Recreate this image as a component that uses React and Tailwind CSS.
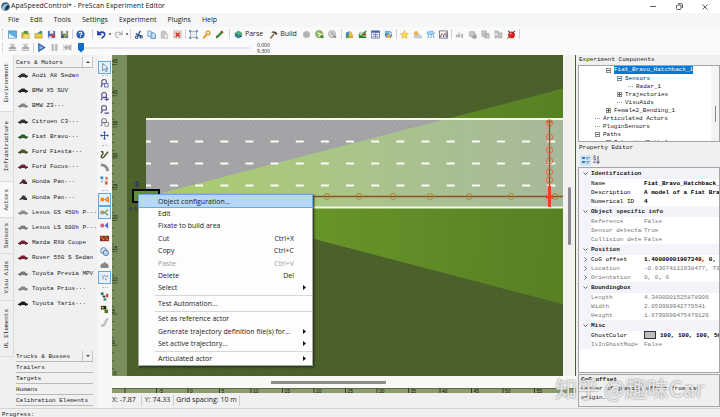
import React from "react";

const mono = "font-['Liberation_Mono',monospace] text-[6px]";

const shapes = {
  scene: <><rect x="0.5" y="1" width="9" height="8" fill="#5aaee0" stroke="#3b78b0" strokeWidth="0.6" /><path d="M1 8.5V4l3 2 2 1 3 1.500z" fill="#e9f6fb" /></>,
  open: <><path d="M1 3h3l1 1h4v5H1z" fill="#e7b52c" stroke="#8a7420" strokeWidth="0.6" /><path d="M3 1h5v3H3z" fill="#4d9a3c" /><path d="M2 9l2-4h6L8 9z" fill="#f6dc6d" /></>,
  openAdd: <><path d="M1 4h8v5H1z" fill="#efc944" stroke="#948030" strokeWidth="0.6" /><path d="M3 4l4-3 2 3z" fill="#3d8bc4" /><path d="M7 1h2v3H7z" fill="#3f9a45" /></>,
  save: <><rect x="1" y="1" width="8" height="8" fill="#486fc0" /><rect x="3" y="1" width="4" height="3" fill="#f4f4f8" /><path d="M4 5h5v3H4z" fill="#d94040" /><rect x="2" y="7" width="3" height="2" fill="#dfe7f6" /></>,
  saveAs: <><rect x="1" y="1" width="8" height="8" fill="#6b7e92" /><rect x="3" y="1" width="4" height="3" fill="#f2f2d8" /><path d="M3 8l5-5 1 1-5 5z" fill="#b0c02d" /><rect x="2" y="6" width="2" height="3" fill="#344a60" /></>,
  help: <><circle cx="5" cy="5" r="4.500" fill="#2b63b5" /><path d="M3.500 4c0-2 3-2 3 0 0 1-1.500 1-1.500 2M5 7v1" fill="none" stroke="#fff" strokeWidth="1.200" /></>,
  undo: <path d="M1 1v4h4M1.500 4.500C4 1 9 2 8.500 5.500 8 8 6 8.500 5 9" fill="none" stroke="#2c3fa8" strokeWidth="1.800" />,
  redo: <path d="M9 1v4H5M8.500 4.500C6 1 1 2 1.500 5.500 2 8 4 8.500 5 9" fill="none" stroke="#b7b7b7" strokeWidth="1.400" />,
  cut: <><path d="M7 1L4 7M2 4l6 3" stroke="#30548c" strokeWidth="1.500" /><circle cx="3" cy="8" r="1.400" fill="none" stroke="#24457e" strokeWidth="1.200" /><circle cx="8" cy="7.500" r="1.300" fill="none" stroke="#24457e" strokeWidth="1.200" /></>,
  copy: <><path d="M1 1h3l1.500 1.500V7H1z" fill="#d8ecfa" stroke="#4a86bd" strokeWidth="0.800" /><path d="M4.500 3h3L9.500 5v4.500h-5z" fill="#bcdcf4" stroke="#3c78b4" strokeWidth="0.800" /></>,
  paste: <><path d="M1.500 2h5v7h-5z" fill="#d2d2d2" stroke="#a9a9a9" strokeWidth="0.800" /><path d="M3 1h2v1H3zM4.500 4.500h4v5h-4z" fill="#ececec" stroke="#a9a9a9" strokeWidth="0.700" /></>,
  del: <><rect x="1" y="1" width="8" height="8" fill="#f2ded8" stroke="#8c8583" strokeWidth="0.800" strokeDasharray="1.500 1" /><path d="M3 3l4.500 4.500M7.500 3L3 7.500" stroke="#ce2f1d" strokeWidth="1.800" /></>,
  select: <><rect x="1.500" y="1.500" width="7" height="7" fill="#e7edf5" stroke="#8593a8" strokeWidth="0.700" /><path d="M0 0h2.500v2.500H0zM7.500 0H10v2.500H7.500zM0 7.500h2.500V10H0zM7.500 7.500H10V10H7.500z" fill="#7c98bf" /></>,
  wrench: <><path d="M1.500 9l4-4.500" stroke="#e09a26" strokeWidth="2.200" /><circle cx="6.800" cy="3.200" r="2" fill="none" stroke="#e5a83a" strokeWidth="1.700" /></>,
  pencil: <><path d="M1 9l1-3 5-5 2 2-5 5z" fill="#459b3c" /><path d="M6 2l1.500-1.500 2 2L8 4z" fill="#a83c32" /><path d="M1 9l1-2.500 1.500 1.500z" fill="#333" /></>,
  parse: <><path d="M5 0.500L9 3v4L5 9.500 1 7V3z" fill="#5ab174" /><path d="M1 3l4 2v4.500L1 7z" fill="#2b8196" /><path d="M6 5l3 2-3 2z" fill="#1b5ca0" /></>,
  hammer: <><path d="M1.500 9.500l4-5" stroke="#a0632b" strokeWidth="1.600" /><path d="M2.500 2.500C4 0.500 7 1 9.500 4L8 5.500 5.500 3.500z" fill="#4d4a47" /></>,
  ball: <><circle cx="5" cy="5" r="4" fill="#b9b9b9" /><path d="M3 3l4 4M7 3L3 7" stroke="#a0a0a0" strokeWidth="0.800" /></>,
  ballGreen: <><circle cx="4.500" cy="4.500" r="4" fill="#8fbf5e" stroke="#6a8c50" strokeWidth="0.600" /><path d="M3 3l4 2-3 2" fill="none" stroke="#fff" strokeWidth="1.200" /><path d="M6 6h3.500v3H6z" fill="#468833" /></>,
  ballGrey: <><circle cx="4.500" cy="4.500" r="4" fill="#cfcfcf" stroke="#a1a1a1" strokeWidth="0.700" /><path d="M3 3h3v3M6 6h3v3H6z" fill="#999" /></>,
  palette: <><path d="M1 3l4-2v8H1z" fill="#3f89cc" /><path d="M4 4l3-3 2 5-4 1z" fill="#edc034" /><path d="M3 6h6v3H3z" fill="#d8a94a" /><path d="M1 6h3v3H1z" fill="#3c9a54" /></>,
  checks: <><path d="M1 2h8v7H1z" fill="#b9d5ae" /><path d="M1 5l2 3 6-7M1 8h8" fill="none" stroke="#27792a" strokeWidth="1.500" /><path d="M6 4h3v2H6z" fill="#b43a30" /></>,
  table: <><rect x="0.500" y="1" width="9" height="8" fill="#eaeefa" stroke="#5b6a9c" strokeWidth="0.800" /><rect x="0.500" y="1" width="9" height="2" fill="#475fa8" /><path d="M2 5h6M2 7h6M5 3v6" stroke="#7785b8" strokeWidth="0.900" /></>,
  globe: <><circle cx="5" cy="5" r="4" fill="#3c85c6" /><path d="M1 1h5v3H1z" fill="#6cb0de" /><path d="M3 5h4v4H3z" fill="#ecab45" /><path d="M5 2l4 2-2 2z" fill="#d8edf6" /></>,
  star: <path d="M5 0.500l1.400 3 3.100.4-2.300 2.200.6 3.200L5 7.800 2.200 9.300l.6-3.200L.5 3.900l3.100-.4z" fill="#ffdb58" stroke="#d1a52e" strokeWidth="0.600" />,
  cloud: <><circle cx="3.500" cy="3.500" r="2.500" fill="#f0b24c" /><path d="M2 8.500c-2-2 1-4 2-2 1-3 4-2 4 0 2 0 2 2 0 2.500z" fill="#cdd3da" stroke="#98a1ad" strokeWidth="0.600" /></>,
  rain: <><path d="M2 5c-2-2 0-4 2-3 2-2 5 0 5 1 1 2-1 2-2 2z" fill="#aad5f4" stroke="#4b94cd" strokeWidth="0.700" /><path d="M3 6L2 9M6 6L5 9M8 6L9 9" stroke="#4b94cd" strokeWidth="1" /></>,
  chart: <><rect x="0.500" y="1" width="9" height="8" fill="#fafafa" stroke="#55555e" strokeWidth="0.800" /><path d="M1.500 7l2-3 2 2 3-4" fill="none" stroke="#b43838" strokeWidth="1" /><path d="M2 8V6.500M5 8V6M8 8V4" stroke="#3a4c96" strokeWidth="1.100" /></>,
  greyA: <path d="M1 5h3V2h1v3h1v3H1zM7 4h2v5H7z" fill="#b3b3b3" />,
  greyB: <><circle cx="4.500" cy="4.500" r="3.800" fill="#bdbdbd" /><path d="M5 5h4.500v4.500H5z" fill="#9c9c9c" /><path d="M2.500 3l4 3" stroke="#e4e4e4" strokeWidth="1" /></>,
  greyC: <path d="M1 1h5v6H1zM4 4h5v5H4z" fill="#cacaca" stroke="#a0a0a0" strokeWidth="0.700" />,
  greyD: <path d="M1 1h4v3H1zM5 3h4v3H5zM1 6h4v3H1zM6 7h3v2H6z" fill="#c2c2c2" stroke="#a5a5a5" strokeWidth="0.600" />,
  redBall: <><circle cx="5" cy="5.500" r="3.800" fill="#c8271c" /><path d="M1 1l3 2M9 1L6.500 3M1.500 8L0.500 9.500" stroke="#333" strokeWidth="1.100" /><circle cx="4" cy="4" r="1.200" fill="#f59186" /></>,
  carGrey: <><path d="M1 5l2-1 2-2 2 2 2 1v2H1zM0.500 8h9v1h-9z" fill="#aaa" /><path d="M2 1.500h6" stroke="#b5b5b5" strokeWidth="1" /></>,
  play: <path d="M2 1l6.500 4L2 9z" fill="#85b9ef" stroke="#1f5db1" strokeWidth="1.300" />,
  pause: <path d="M2 1.500h2v7H2zM6 1.500h2v7H6z" fill="#c6c6c6" stroke="#a0a0a0" strokeWidth="0.500" />,
  skip: <path d="M1 1.500v7M1.500 5l3-3v6zM5 5l3-3v6zM9 1.500v7" fill="#aaa" stroke="#aaa" strokeWidth="0.800" />,
  pointer: <path d="M3 0.500v8l2-2 1.500 3L8 9 6.500 6H9z" fill="#fff" stroke="#45617f" strokeWidth="0.800" />,
  zoomWin: <><path d="M2 7V2.500C2 0 7 0 7 2.500V5H3M1 9l2-3" fill="none" stroke="#4c4c8c" strokeWidth="1.200" /><path d="M5 5h4v4H5z" fill="#edf1fa" stroke="#4864b4" strokeWidth="0.900" /></>,
  zoomIn: <path d="M2 6V2.500C2 0 7 0 7 2.500V6H3M1 9l2-3M5 8h5M7.500 5.500v4.500" fill="none" stroke="#484888" strokeWidth="1.200" />,
  zoomOut: <path d="M2 6V2.500C2 0 7 0 7 2.500V5.500H3M1 9l2-3M5 9h5" fill="none" stroke="#484888" strokeWidth="1.200" />,
  zoomAll: <><path d="M2 6V2.500C2 0 7 0 7 2.500V5H3M1 9l2-3" fill="none" stroke="#555570" strokeWidth="1.100" /><path d="M5.500 5h4v4h-4z" fill="#fff" stroke="#777" strokeWidth="0.900" /></>,
  move: <><path d="M5 1v8M1 5h8" stroke="#4355a5" strokeWidth="1.100" /><path d="M5 0l1.700 2H3.300zM5 10L3.300 8h3.400zM0 5l2-1.700v3.400zM10 5L8 6.700V3.300z" fill="#4355a5" /></>,
  curve: <path d="M1 2c3-1 3 2 1 4s1 4 3 1l4-5" fill="none" stroke="#4d582c" strokeWidth="1.600" />,
  bend: <path d="M1 2c4 0 7 2 7.500 7" fill="none" stroke="#8b8b8b" strokeWidth="3" />,
  nodes: <><path d="M2 2l5 6M8 3L7 8" stroke="#bbb" strokeWidth="0.600" /><path d="M0.500 0.500h3v3h-3z" fill="#3d84cb" /><path d="M6 1h2.500v3H6z" fill="#e36c38" /><path d="M5.500 6h3v3.500h-3z" fill="#de5e35" /><circle cx="2" cy="6" r="1" fill="#74a5d2" /></>,
  camOrange: <><path d="M0.500 3h4v4h-4z" fill="#ef8b2d" /><path d="M5 5l4.500-3v6z" fill="#f0a844" stroke="#d8641d" strokeWidth="0.800" /></>,
  camGreen: <><path d="M0.500 3h4v4h-4z" fill="#ad9a6a" /><path d="M9 2L5 5l4 3" fill="none" stroke="#719552" strokeWidth="1.400" /></>,
  camBlue: <><path d="M0.500 3h4v4h-4z" fill="#d56180" /><path d="M5 5l4-3.500v7z" fill="#5864e0" /></>,
  film: <><rect x="0" y="2" width="10" height="6" fill="#7e2c20" /><path d="M1 3h2v2H1zM5 3h3v1H5zM3 5h2v2H3zM7 5h2v2H7z" fill="#e58a3a" /></>,
  rings: <><circle cx="4" cy="4" r="3.300" fill="#d5e5f6" stroke="#5778ac" /><circle cx="6.500" cy="6.500" r="3" fill="#bdd7f2" stroke="#4a6ca8" /></>,
  hill: <path d="M0.500 9V6L2 4l1.500 0L5 2l2 2h1.500L9.500 6v3z" fill="#888" />,
  dashes: <path d="M2 3l2 1M5 2l1 2M7 4l2-1M3 7l1-2M6 6l1 2" stroke="#5b7fa6" strokeWidth="1.100" />,
  blocksA: <><path d="M1 0.500h3v3H1z" fill="#2c6f86" /><path d="M3 4h3v2H3z" fill="#333" /><path d="M7 2h2v4H7z" fill="#b2302c" /><path d="M4 7h3v2.500H4z" fill="#30855c" /></>,
  blocksB: <><path d="M1 1h6v4H1z" fill="#26260f" /><path d="M2 2h2v2H2z" fill="#e3d23a" /><path d="M5 5h4v4H5z" fill="#4d7a2c" /></>,
  roadGrey: <path d="M1 9c3 0 4-1 5-4s1-3 3-4" fill="none" stroke="#c2c2c2" strokeWidth="2.800" />,
};

function Icon({ name }) {
  return (
    <svg viewBox="0 0 10 10" className="size-[9px] shrink-0" aria-hidden="true">
      {shapes[name]}
    </svg>
  );
}

function ToolButton({ name, label }) {
  return (
    <button aria-label={label || name} className={label ? "flex h-3 shrink-0 items-center gap-[2px] px-[3px]" : "flex h-3 w-[13px] shrink-0 items-center justify-center"}>
      <Icon name={name} />
      {label}
    </button>
  );
}

const Sep = () => <span className="mx-px h-[10px] w-px shrink-0 bg-[#d2d2d6]" />;
const Grip = () => <span className="mr-[3px] ml-[2px] h-[10px] w-px shrink-0 border-l border-dotted border-[#c4c4c4]" />;
const Caret = () => <span className="mx-px size-[2px] shrink-0 rounded-full bg-[#555]" />;

function Header() {
  return (
    <header className="shrink-0 bg-[#fafafa]">
      <div className="flex h-[13px] items-center bg-white pl-px">
        <svg viewBox="0 0 10 10" className="size-[9px]" aria-hidden="true">
          <circle cx="5" cy="5" r="4.800" fill="#2d5d7c" />
          <path d="M1 6c2-4 5-5 8-3-3 0-4 2-5 6C2 9 1 8 1 6z" fill="#9dc0d3" />
          <path d="M4 7l4-3 1 2-3 3z" fill="#173a54" />
        </svg>
        <h1 className="ml-px flex-1 text-[7px]">ApaSpeedControl* - PreScan Experiment Editor</h1>
        <button aria-label="Minimize" className="flex w-[26px] justify-center"><span className="h-px w-[6px] bg-[#555]" /></button>
        <button aria-label="Restore" className="flex w-[26px] justify-center">
          <svg viewBox="0 0 7 7" className="size-[7px]" fill="none" stroke="#444" strokeWidth="0.900"><rect x="0.500" y="2" width="4.500" height="4.500" rx="1" /><path d="M2 .7h3.500q1 0 1 1V5" /></svg>
        </button>
        <button aria-label="Close" className="mr-[2px] flex w-[26px] justify-center">
          <svg viewBox="0 0 7 7" className="size-[6px]" stroke="#333" strokeWidth="0.900"><path d="M.5.5l6 6M6.500.5l-6 6" /></svg>
        </button>
      </div>
      <nav className="flex h-[14px] items-center gap-[11px] bg-[#f6f6f6] pl-2 text-[7px]">
        {["File", "Edit", "Tools", "Settings", "Experiment", "Plugins", "Help"].map((m) => <button key={m}>{m}</button>)}
      </nav>
      <div className="flex h-[14px] items-center text-[7px]">
        <Grip />
        {["scene", "open", "openAdd", "save", "saveAs"].map((n) => <ToolButton key={n} name={n} />)}
        <Sep />
        <ToolButton name="help" />
        <span className="w-1" /><Sep /><span className="w-px" />
        <ToolButton name="undo" /><Caret /><ToolButton name="redo" /><Caret /><Sep />
        {["cut", "copy", "paste", "del"].map((n) => <ToolButton key={n} name={n} />)}
        <Sep />
        {["select", "wrench", "pencil"].map((n) => <ToolButton key={n} name={n} />)}
        <span className="w-[2px]" /><Sep />
        <ToolButton name="parse" label="Parse" />
        <ToolButton name="hammer" label="Build" />
        {["ball", "ballGreen", "ballGrey"].map((n) => <ToolButton key={n} name={n} />)}
        <span className="w-px" /><Sep />
        {["palette", "checks", "table", "globe"].map((n) => <ToolButton key={n} name={n} />)}
        <Sep />
        {["star", "cloud", "rain", "chart"].map((n) => <ToolButton key={n} name={n} />)}
        <Sep />
        {["greyA", "greyB", "greyC", "greyD", "redBall"].map((n) => <ToolButton key={n} name={n} />)}
        <Sep />
      </div>
      <div className="flex h-[14px] items-center pb-px">
        <Grip />
        <ToolButton name="carGrey" /><ToolButton name="carGrey" /><Sep />
        <ToolButton name="play" /><ToolButton name="pause" /><ToolButton name="skip" />
        <input
          type="range"
          aria-label="Simulation time"
          defaultValue="0"
          className="ml-1 h-[10px] w-[172px] appearance-none bg-transparent [&::-webkit-slider-runnable-track]:h-[2px] [&::-webkit-slider-runnable-track]:bg-[#e6e6e6] [&::-webkit-slider-thumb]:-mt-1 [&::-webkit-slider-thumb]:h-[10px] [&::-webkit-slider-thumb]:w-[6px] [&::-webkit-slider-thumb]:appearance-none [&::-webkit-slider-thumb]:bg-[#0b6fc9] [&::-webkit-slider-thumb]:[clip-path:polygon(0_0,100%_0,100%_70%,50%_100%,0_70%)]"
        />
        <output className="ml-[7px] text-[5px] leading-[6px]">0.000<br />9.300</output>
      </div>
    </header>
  );
}

const tabs = [
  ["Environment", "h-[57px] bg-[#f8f8f8]"],
  ["Infrastructure", "h-[70px]"],
  ["Actors", "h-9 bg-[#f8f8f8]"],
  ["Sensors", "h-9"],
  ["Visu Aids", "h-[47px]"],
  ["UL Elements", "h-14"],
];

const cars = [
  ["Audi A8 Sedan", "#2e2e2e"], ["BMW X5 SUV", "#262626"], ["BMW Z3···", "#858585"], ["Citroen C3···", "#333333"],
  ["Fiat Bravo···", "#2f5a2c"], ["Ford Fiesta···", "#4a5630"], ["Ford Focus···", "#6e2334"], ["Honda Pan···", "#4a2430"],
  ["Honda Pan···", "#35303a"], ["Lexus GS 450h P···", "#8a8c8e"], ["Lexus LS 600h P···", "#7d8082"], ["Mazda RX8 Coupe", "#702233"],
  ["Rover 550 S Sedan", "#7c1f30"], ["Toyota Previa MPV", "#777777"], ["Toyota Prius···", "#888888"], ["Toyota Yaris···", "#1d1d1d"],
];

const strip = [
  ["*pointer"],
  ["zoomWin", "zoomIn", "zoomOut", "zoomAll", "move"],
  ["curve", "bend", "nodes"],
  ["*camOrange", "*camGreen", "camBlue", "film", "rings", "hill", "*dashes"],
  ["blocksA", "blocksB", "roadGrey"],
];

function Library() {
  return (
    <aside className={`flex shrink-0 bg-[#f0f0f0] ${mono}`}>
      <div className="flex w-[14px] flex-col">
        {tabs.map(([t, c]) => (
          <button key={t} className={`flex items-center justify-center border-r border-b border-[#dcdcdc] ${c}`}>
            <span className="rotate-180 [writing-mode:vertical-rl]">{t}</span>
          </button>
        ))}
      </div>
      <div className="flex w-[83px] flex-col pt-[2px] pr-1 pb-[2px] pl-[2px]">
        <button className="flex h-[11px] items-center border-b border-[#b8b8b8]">
          <span className="flex-1 text-left">Cars &amp; Motors</span>
          <span className="flex h-[10px] w-[11px] items-center justify-center border-x border-[#c4c4c4] bg-[#f8f8f8]"><svg viewBox="0 0 4 2" className="w-1"><path d="M0 2l2-2 2 2z" fill="#444" /></svg></span>
        </button>
        <ul className="grid h-[243px] shrink-0 auto-rows-fr">
          {cars.map(([n, c], i) => (
            <li key={i} className="flex items-center gap-1 pl-[2px] whitespace-nowrap">
              <svg viewBox="0 0 10 5" className="h-[5px] w-[10px] shrink-0" aria-hidden="true">
                {n.startsWith("Honda")
                  ? <path d="M1 4.500L3 3 5 0l1 1 2-.5L7 2l2 1v2H6L4 4 3 5z" fill={c} />
                  : <><path d="M0 3l2-1 1.500-1.500h3L8 2l2 .7v1.300H0z" fill={c} /><circle cx="2.300" cy="4" r="0.900" fill={c} /><circle cx="7.700" cy="4" r="0.900" fill={c} /></>}
              </svg>
              {n}
            </li>
          ))}
        </ul>
        <div className="mt-auto">
          {["Trucks & Busses", "Trailers", "Targets", "Humans", "Calibration Elements"].map((t, i) => (
            <button key={t} className="flex h-[11px] w-full items-center border-b border-[#b8b8b8] whitespace-nowrap">
              <span className="flex-1 text-left">{t}</span>
              {i === 0 && <span className="flex h-[10px] w-[11px] items-center justify-center border-x border-[#c4c4c4]"><svg viewBox="0 0 4 2" className="w-1"><path d="M0 0l2 2 2-2z" fill="#444" /></svg></span>}
            </button>
          ))}
        </div>
      </div>
      <div className="flex w-[15px] flex-col items-center bg-[#f6f6f6] pt-[6px]">
        {strip.map((g, i) => (
          <div key={i} className="flex flex-col items-center">
            {i > 0 && <span className={`w-[6px] border-t border-dotted border-[#bbb] ${i === 1 ? "my-px" : "mt-[3px] mb-[2px]"}`} />}
            {g.map((n) => {
              const on = n[0] === "*";
              const id = n.replace("*", "");
              return (
                <button key={n} aria-label={id} aria-pressed={on} className={`flex size-[13px] shrink-0 items-center justify-center border ${on ? "border-[#62a8e2] bg-[#e6f1fb]" : "border-transparent"}`}>
                  <Icon name={id} />
                </button>
              );
            })}
          </div>
        ))}
      </div>
    </aside>
  );
}

const range = (n) => Array.from({ length: n }, (_, i) => i);

function Scene() {
  return (
    <svg viewBox="127 55 436 321" preserveAspectRatio="xMinYMin slice" className="absolute inset-0 size-full" role="img" aria-label="Build area">
      <defs>
        <pattern id="grass" width="10" height="8" patternUnits="userSpaceOnUse">
          <rect width="10" height="8" fill="#4a5f29" />
          <path d="M0 2l3 2 3-2 4 2M1 7l3-2 3 2 3-2M3 0v2M7 4v2" fill="none" stroke="#50662e" strokeWidth="0.700" />
          <path d="M1 4h1M5 6h1M8 1h1M4 1h1" stroke="#455926" strokeWidth="1" />
        </pattern>
        <pattern id="asphalt" width="9" height="7" patternUnits="userSpaceOnUse">
          <rect width="9" height="7" fill="#a4a3a6" />
          <path d="M1 1h1M5 2h1M7 5h1M3 4h1" stroke="#aaa9ac" />
          <path d="M3 2h1M7 1h1M1 5h1M5 6h1" stroke="#9d9ca0" />
        </pattern>
        <linearGradient id="beamGrass" gradientUnits="userSpaceOnUse" x1="150" y1="0" x2="563" y2="0">
          <stop offset="0" stopColor="#7cb62c" stopOpacity="0.850" />
          <stop offset="0.500" stopColor="#6c9e28" stopOpacity="0.780" />
          <stop offset="1" stopColor="#5b8b20" stopOpacity="0.750" />
        </linearGradient>
        <linearGradient id="beamRoad" gradientUnits="userSpaceOnUse" x1="150" y1="0" x2="563" y2="0">
          <stop offset="0" stopColor="#aad85a" stopOpacity="0.800" />
          <stop offset="0.500" stopColor="#acd080" stopOpacity="0.750" />
          <stop offset="1" stopColor="#a8c297" stopOpacity="0.700" />
        </linearGradient>
        <clipPath id="road"><rect x="146" y="118" width="500" height="90" /></clipPath>
      </defs>
      <rect x="127" y="55" width="600" height="500" fill="url(#grass)" />
      <path d="M150 196L650 66V327z" fill="url(#beamGrass)" />
      <rect x="146" y="119" width="500" height="88" fill="url(#asphalt)" />
      <path d="M150 196L650 66V327z" fill="url(#beamRoad)" clipPath="url(#road)" />
      <path d="M146 119h500M146 207.500h500" stroke="#f3f8e8" strokeWidth="2" />
      {[141.500, 163.500, 185.500].map((y) => <path key={y} d={`M146 ${y}h5M170 ${y}h480`} stroke="#fafcf5" strokeWidth="2" strokeDasharray="8 17.150" />)}
      <path d="M160 196.500h440" stroke="#8b5228" strokeWidth="1.300" />
      {[327, 359, 393, 430, 469, 511, 555].map((x) => <circle key={x} cx={x} cy="196.500" r="3" fill="none" stroke="#a98532" strokeWidth="0.900" />)}
      <path d="M549.500 120v87" stroke="#a4442a" strokeWidth="1.300" />
      {[123, 137, 150, 161, 172, 180].map((y) => <circle key={y} cx="549.500" cy={y} r="3.200" fill="none" stroke="#dd6a43" strokeWidth="1" />)}
      <path d="M549.500 186v21M546 197h7" stroke="#f33c20" strokeWidth="3" />
      <path d="M547 122h5" stroke="#dd5533" strokeWidth="1.500" />
      <rect x="133" y="190" width="26" height="12" fill="#5f9138" stroke="#080808" strokeWidth="2" />
      <path d="M137 188v-7M135 183.500l2-2.500 2 2.500M135 186l4-1" fill="none" stroke="#26336f" strokeWidth="1" />
      <text x="129" y="211" fontSize="6" fontFamily="Liberation Sans" fill="#26336f">6.1</text>
    </svg>
  );
}

const menu = [
  ["Object configuration..."], ["Edit"], ["Fixate to build area"], ["Cut", "Ctrl+X"], ["Copy", "Ctrl+C"], ["Paste", "Ctrl+V"], ["Delete", "Del"], ["Select", ">"],
  null, ["Test Automation..."], null,
  ["Set as reference actor"], ["Generate trajectory definition file(s) for...", ">"], ["Set active trajectory...", ">"],
  null, ["Articulated actor", ">"],
];

function ContextMenu() {
  return (
    <div role="menu" className="absolute top-[139px] left-[11px] flex h-[172px] w-[175px] flex-col border border-[#a8a8a8] bg-[#fdfdfd] text-[7px] shadow-[1px_1px_2px_#1c2810]">
      {menu.map((m, i) =>
        m === null ? (
          <div key={i} role="separator" className="my-px ml-4 h-px bg-[#d6d6d6]" />
        ) : (
          <button key={i} role="menuitem" disabled={m[0] === "Paste"} className={`flex flex-1 items-center pr-[18px] pl-[19px] leading-none whitespace-nowrap disabled:text-[#9a9a9a] ${i === 0 ? "bg-[#b5d7f8] outline outline-[#6aa9e4]" : ""}`}>
            <span className="flex-1 text-left">{m[0]}</span>
            {m[1] === ">" ? <svg viewBox="0 0 3 5" className="-mr-3 h-[5px] w-[3px]"><path d="M0 0l3 2.500L0 5z" fill="#111" /></svg> : m[1]}
          </button>
        )
      )}
    </div>
  );
}

function BuildArea() {
  return (
    <main className="flex min-w-0 flex-1 flex-col">
      <div className="flex min-h-0 flex-1">
        <svg viewBox="112 55 15 321" preserveAspectRatio="xMinYMin slice" className="h-full w-[15px] shrink-0 bg-[#778d5c]" aria-hidden="true">
          {range(11).map((i) => (
            <g key={i}>
              <path d={`M112 ${64.500 + i * 31.200}h5M112 ${80 + i * 31.200}h2M112 ${72 + i * 31.200}h2M112 ${88 + i * 31.200}h2`} stroke="#3c4a2b" strokeWidth="0.800" />
              <text x="112" y={63 + i * 31.200} fontSize="5" fontFamily="Liberation Sans" fill="#10150a">{45 - i * 5}</text>
            </g>
          ))}
        </svg>
        <div className="relative min-w-0 flex-1">
          <Scene />
          <ContextMenu />
        </div>
        <div className="flex w-3 shrink-0 justify-center bg-[#f1f2ef] pt-[132px]"><span className="h-[58px] w-[3px] rounded bg-[#8b8b8b]" /></div>
        <div className="w-px shrink-0 bg-[#4b6030]" />
      </div>
      <div className="flex h-3 shrink-0 items-center bg-[#f8f8f5] pr-[190px]"><span className="ml-[159px] h-[3px] flex-1 bg-[#8d908a]" /></div>
      <svg viewBox="112 0 464 5" preserveAspectRatio="xMinYMin slice" className="h-[5px] w-full shrink-0 bg-[#8b9d6d]" aria-hidden="true">
        <path d="M112 .5h600" stroke="#5c6e43" />
        {range(14).map((i) => (
          <g key={i}>
            <path d={`M${125 + i * 31.500} 0v5`} stroke="#313c22" />
            {i > 0 && <text x={127 + i * 31.500} y="4.500" fontSize="5" fontFamily="Liberation Sans" fill="#10150a">{i * 5 - 10}</text>}
          </g>
        ))}
      </svg>
      <footer className="flex h-[15px] shrink-0 items-center bg-[#f0f0f0] text-[7px] text-[#222]">
        <span className="border-r border-[#cfcfcf] pr-[5px]">X: -7.87</span>
        <span className="border-r border-[#cfcfcf] px-[3px]">Y: 74.33</span>
        <span className="border-r border-[#cfcfcf] px-[2px]">Grid spacing: 10 m</span>
      </footer>
    </main>
  );
}

const tree = [
  [2, "-", "Fiat_Bravo_Hatchback_1", true], [3, "-", "Sensors"], [4, "", "Radar_1"], [3, "+", "Trajectories"], [3, "", "VisuAids"],
  [2, "+", "Female2_Bending_1"], [1, "", "Articulated Actors"], [1, "", "PluginSensors"], [1, "-", "Paths"], [2, "+", "InheritedPath_1"],
];
const indent = ["", "pl-4", "pl-[27px]", "pl-[38px]", "pl-[49px]"];

const groups = [
  ["Identification", [["Name", "Fiat_Bravo_Hatchback_1", "b"], ["Description", "A model of a Fiat Bravo", "b"], ["Numerical ID", "4", "b"]]],
  ["Object specific info", [["Reference", "False", "g"], ["Sensor detectable", "True", "g"], ["Collision detectable", "False", "g"]]],
  ["Position", [["CoG offset", "1.40000001907349, 0, 0", "b", ">"], ["Location", "-0.63074111938477, 73.07", "g", ">"], ["Orientation", "0, 0, 0", "g", ">"]]],
  ["Boundingbox", [["Length", "4.3400001525878906", "g"], ["Width", "2.059999942779541", "g"], ["Height", "1.6799999475479126", "g"]]],
  ["Misc", [["GhostColor", "100, 100, 100, 50", "b", "", true], ["IsInGhostMode", "False", "g"]]],
];

const Chevron = ({ right }) => (
  <svg viewBox="0 0 5 5" className="mx-auto size-[5px]" fill="none" stroke="#555" strokeWidth="0.900"><path d={right ? "M1.500 .5l2 2-2 2" : "M.5 1.500l2 2 2-2"} /></svg>
);

function Inspector() {
  return (
    <aside className={`flex w-36 shrink-0 flex-col bg-[#f0f0f0] pb-px pl-[2px] whitespace-nowrap ${mono}`}>
      <h2 className="h-[10px] pl-px leading-[10px]">Experiment Components</h2>
      <div className="flex h-[77px] shrink-0 overflow-hidden border border-[#a4a4a4] bg-white">
        <ul className="flex-1">
          {tree.map(([d, mark, t, on]) => (
            <li key={t} className={`flex h-2 items-center ${indent[d]}`}>
              {mark
                ? <svg viewBox="0 0 5 5" className="mr-[3px] size-[5px] shrink-0" fill="none" stroke="#777" strokeWidth="0.800"><rect x="0.400" y="0.400" width="4.200" height="4.200" /><path d={mark === "+" ? "M1 2.500h3M2.500 1v3" : "M1 2.500h3"} stroke="#333" /></svg>
                : <span className="mr-[3px] w-[5px] border-t border-dotted border-[#999]" />}
              <span className={on ? "bg-[#0078d7] leading-2 text-white" : ""}>{t}</span>
            </li>
          ))}
        </ul>
        <div className="flex w-2 justify-center bg-[#f4f4f4] pt-10"><span className="h-4 w-px bg-[#888]" /></div>
      </div>
      <h2 className="h-[11px] pl-px leading-[11px]">Property Editor</h2>
      <div className="flex h-[14px] shrink-0 items-center gap-[2px] pl-[2px]">
        <button aria-label="Categorized" className="flex size-[11px] items-center justify-center bg-[#cfe6fa]"><svg viewBox="0 0 8 8" className="size-2"><path d="M0 1h3v2H0zM0 5h3v2H0z" fill="#3c7ab8" /><path d="M4 1.500h4M4 3h3M4 5.500h4M4 7h3" stroke="#6f90b0" strokeWidth="0.800" /></svg></button>
        <button aria-label="Sort alphabetically" className="flex items-center"><span className="text-[5px] leading-[4px] text-[#333c80]">A<br />Z</span><svg viewBox="0 0 4 8" className="h-2 w-1"><path d="M2 0v7M.5 5.500L2 7.500l1.500-2" fill="none" stroke="#444" strokeWidth="0.900" /></svg></button>
      </div>
      <div className="min-h-0 flex-1 overflow-hidden border border-[#a4a4a4] bg-white">
        <table className="w-full table-fixed border-collapse">
          <colgroup><col className="w-3" /><col className="w-[53px]" /><col /></colgroup>
          {groups.map(([g, rows]) => (
            <tbody key={g}>
              <tr className="h-[11px] bg-[#f2f4fa]"><td className="p-0"><Chevron /></td><th colSpan="2" className="p-0 text-left leading-[11px] font-bold">{g}</th></tr>
              {rows.map(([k, v, tone, arrow, swatch]) => (
                <tr key={k} className={`h-[9px] leading-[9px] ${tone === "g" ? "text-[#777]" : "text-black"}`}>
                  <td className="bg-[#f2f4fa] p-0">{arrow && <Chevron right />}</td>
                  <th className="p-0 text-left font-normal"><div className="mr-[2px] overflow-hidden">{k}</div></th>
                  <td className={`overflow-hidden p-0 ${tone === "b" ? "font-bold" : ""}`}>
                    {swatch && <span className="mr-1 inline-block h-2 w-3 border border-[#333] bg-[#bcbcbc] align-middle" />}{v}
                  </td>
                </tr>
              ))}
            </tbody>
          ))}
        </table>
      </div>
      <div className="mt-px h-[33px] shrink-0 overflow-hidden border border-[#a4a4a4] pl-[2px] leading-[9px]">
        <p className="font-bold">CoG offset</p>
        <p>Center of gravity offset from car<br />origin.</p>
      </div>
    </aside>
  );
}

export default function App() {
  return (
    <div className="relative flex h-screen flex-col overflow-hidden bg-[#f0f0f0] font-['Open_Sans',sans-serif] leading-normal text-[#1a1a1a]">
      <Header />
      <div className="flex min-h-0 flex-1">
        <Library />
        <BuildArea />
        <Inspector />
      </div>
      <div className={`h-[9px] shrink-0 border-t border-[#d4d4d4] pl-[2px] leading-[12px] ${mono}`}>Progress:</div>
      <div className="pointer-events-none absolute right-4 bottom-4 font-['Noto_Sans_CJK_SC',sans-serif] text-[22px] leading-7 whitespace-nowrap text-white/80 [text-shadow:0_0_2px_#666]">知乎 @趣味Car</div>
    </div>
  );
}
